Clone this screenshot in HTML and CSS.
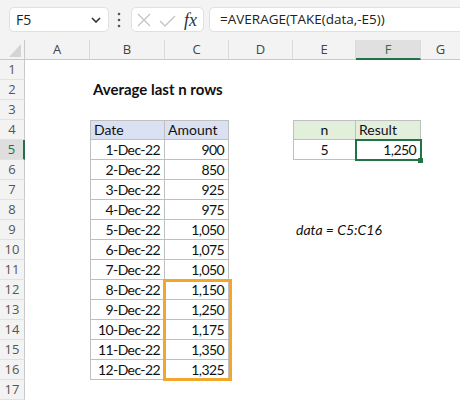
FILE: index.html
```html
<!DOCTYPE html>
<html>
<head>
<meta charset="utf-8">
<link rel="stylesheet" href="styles.css">
</head>
<body>
<div class="app">
  <div class="topbar">
    <div class="namebox">
      <span class="nb-text">F5</span>
      <svg class="chev" width="10" height="6" viewBox="0 0 10 6"><polyline points="1,1 5,5 9,1" fill="none" stroke="#333" stroke-width="1.6"/></svg>
    </div>
    <svg class="dots" width="4" height="16" viewBox="0 0 4 16"><circle cx="2" cy="2" r="1.3" fill="#555"/><circle cx="2" cy="8" r="1.3" fill="#555"/><circle cx="2" cy="14" r="1.3" fill="#555"/></svg>
    <div class="fxbox">
      <svg class="ico-x" width="14" height="14" viewBox="0 0 14 14"><path d="M1 1 L13 13 M13 1 L1 13" stroke="#c4c4c4" stroke-width="1.3" fill="none"/></svg>
      <svg class="ico-ok" width="17" height="12" viewBox="0 0 17 12"><path d="M1 6 L6 11 L16 1" stroke="#c4c4c4" stroke-width="1.3" fill="none"/></svg>
      <span class="fx">fx</span>
    </div>
    <div class="formula">=AVERAGE(TAKE(data,-E5))</div>
  </div>

  <div class="sheet">
    <div class="row">
      <div class="rh corner"><svg width="24" height="19" viewBox="0 0 24 19"><polygon points="21,4 21,17 9,17" fill="#d4d4d4"/></svg></div>
      <div class="ch ca">A</div><div class="ch cb">B</div><div class="ch cc">C</div><div class="ch cd">D</div><div class="ch ce">E</div><div class="ch cf on">F</div><div class="ch cg">G</div>
    </div>

    <div class="row"><div class="rh">1</div></div>
    <div class="row"><div class="rh">2</div><div class="c ca"></div><div class="c cb title">Average last n rows</div></div>
    <div class="row"><div class="rh">3</div></div>
    <div class="row"><div class="rh">4</div><div class="c ca"></div>
      <div class="c cb t tl tt hb">Date</div><div class="c cc t tt hb">Amount</div><div class="c cd"></div>
      <div class="c ce t tl tt hg ctr">n</div><div class="c cf t tt hg">Result</div></div>
    <div class="row"><div class="rh on">5</div><div class="c ca"></div>
      <div class="c cb t tl r">1-Dec-22</div><div class="c cc t r">900</div><div class="c cd"></div>
      <div class="c ce t tl ctr">5</div><div class="c cf t r sel">1,250</div></div>
    <div class="row"><div class="rh">6</div><div class="c ca"></div><div class="c cb t tl r">2-Dec-22</div><div class="c cc t r">850</div></div>
    <div class="row"><div class="rh">7</div><div class="c ca"></div><div class="c cb t tl r">3-Dec-22</div><div class="c cc t r">925</div></div>
    <div class="row"><div class="rh">8</div><div class="c ca"></div><div class="c cb t tl r">4-Dec-22</div><div class="c cc t r">975</div></div>
    <div class="row"><div class="rh">9</div><div class="c ca"></div><div class="c cb t tl r">5-Dec-22</div><div class="c cc t r">1,050</div><div class="c cd"></div><div class="c ce note">data = C5:C16</div></div>
    <div class="row"><div class="rh">10</div><div class="c ca"></div><div class="c cb t tl r">6-Dec-22</div><div class="c cc t r">1,075</div></div>
    <div class="row"><div class="rh">11</div><div class="c ca"></div><div class="c cb t tl r">7-Dec-22</div><div class="c cc t r">1,050</div></div>
    <div class="row"><div class="rh">12</div><div class="c ca"></div><div class="c cb t tl r">8-Dec-22</div><div class="c cc t r">1,150</div></div>
    <div class="row"><div class="rh">13</div><div class="c ca"></div><div class="c cb t tl r">9-Dec-22</div><div class="c cc t r">1,250</div></div>
    <div class="row"><div class="rh">14</div><div class="c ca"></div><div class="c cb t tl r">10-Dec-22</div><div class="c cc t r">1,175</div></div>
    <div class="row"><div class="rh">15</div><div class="c ca"></div><div class="c cb t tl r">11-Dec-22</div><div class="c cc t r">1,350</div></div>
    <div class="row"><div class="rh">16</div><div class="c ca"></div><div class="c cb t tl r">12-Dec-22</div><div class="c cc t r">1,325</div></div>
    <div class="row"><div class="rh">17</div></div>

    <div class="range-hl"></div>
  </div>
</div>
</body>
</html>
```

FILE: styles.css
```css
html, body {
  margin: 0;
  padding: 0;
  background: #ffffff;
}

.app {
  width: 460px;
  height: 400px;
  overflow: hidden;
  font-family: "Lato", "Open Sans", sans-serif;
}

/* ---------- formula bar ---------- */
.topbar {
  box-sizing: border-box;
  height: 40px;
  padding: 7px 0 0 9px;
  display: flex;
  align-items: flex-start;
  background: #f3f3f3;
  font-family: "Open Sans", "Noto Sans", sans-serif;
}

.namebox {
  box-sizing: border-box;
  width: 100px;
  height: 25px;
  background: #fff;
  border: 1px solid #e0e0e0;
  border-radius: 5px;
  display: flex;
  align-items: center;
  justify-content: space-between;
  padding: 0 7px 0 6px;
}

.nb-text {
  font-size: 14px;
  color: #222;
}

.chev {
  margin-top: 1px;
}

.dots {
  margin: 5px 0 0 8px;
}

.fxbox {
  box-sizing: border-box;
  width: 73px;
  height: 25px;
  margin-left: 10px;
  background: #fff;
  border: 1px solid #e0e0e0;
  border-radius: 5px;
  display: flex;
  align-items: center;
  padding: 0 0 0 5px;
}

.ico-x {
  margin-top: 1px;
}

.ico-ok {
  margin: 3px 0 0 8px;
}

.fx {
  margin-left: 8px;
  font-family: "Liberation Serif", "DejaVu Serif", serif;
  font-style: italic;
  font-size: 18px;
  color: #333;
  line-height: 20px;
}

.formula {
  box-sizing: border-box;
  flex: 1;
  height: 25px;
  margin: 0 -12px 0 5px;
  background: #fff;
  border: 1px solid #e0e0e0;
  border-radius: 5px;
  padding: 0 0 0 10px;
  font-size: 13.5px;
  line-height: 22px;
  color: #222;
  white-space: nowrap;
}

/* ---------- sheet ---------- */
.sheet {
  position: relative;
}

.row {
  display: flex;
  height: 20px;
}

.rh {
  box-sizing: border-box;
  flex: none;
  width: 25px;
  height: 20px;
  background: #f3f3f3;
  border-right: 1px solid #c8c8c8;
  border-bottom: 1px solid #e2e2e2;
  text-align: center;
  font-family: "Open Sans", "Noto Sans", sans-serif;
  font-size: 13px;
  line-height: 19px;
  color: #555;
}

.rh.on {
  background: #dedede;
  border-right: 2px solid #217346;
  color: #217346;
}

.rh.corner {
  border-bottom-color: #c8c8c8;
}

.rh.corner svg {
  display: block;
}

.ch {
  box-sizing: border-box;
  flex: none;
  height: 20px;
  background: #f3f3f3;
  border-right: 1px solid #dadada;
  border-bottom: 1px solid #c8c8c8;
  text-align: center;
  font-family: "Open Sans", "Noto Sans", sans-serif;
  font-size: 13px;
  line-height: 19px;
  color: #444;
}

.ch.on {
  background: #e0e0e0;
  border-bottom: 2px solid #217346;
  color: #217346;
}

.ch.cg {
  border-right: none;
  flex: 1;
}

.c {
  box-sizing: border-box;
  flex: none;
  height: 20px;
  padding: 0 3px;
  font-size: 14px;
  line-height: 19px;
  color: #111;
  white-space: nowrap;
}

.ca { width: 65px; }
.cb { width: 75px; }
.cc { width: 64px; }
.cd { width: 64px; }
.ce { width: 63px; }
.cf { width: 65px; }
.cg { width: 39px; }

.title {
  font-weight: 700;
  font-size: 15px;
}

.note {
  font-style: italic;
}

.t {
  border-right: 1px solid #bfbfbf;
  border-bottom: 1px solid #bfbfbf;
}

.tl { border-left: 1px solid #bfbfbf; }
.tt { border-top: 1px solid #bfbfbf; line-height: 18px; }

.hb { background: #d9e1f2; }
.hg { background: #e2efda; }

.r {
  text-align: right;
  letter-spacing: -0.6px;
  padding-right: 4px;
}
.ctr { text-align: center; }

.sel {
  position: relative;
}

.sel::before {
  content: "";
  position: absolute;
  left: -1px;
  top: -1px;
  right: -2px;
  bottom: -2px;
  border: 2px solid #217346;
}

.sel::after {
  content: "";
  position: absolute;
  right: -3px;
  bottom: -4px;
  width: 5px;
  height: 5px;
  background: #217346;
}

.range-hl {
  position: absolute;
  left: 163px;
  top: 239px;
  width: 69px;
  height: 102px;
  box-sizing: border-box;
  border: 3px solid #f2a62c;
}
```
